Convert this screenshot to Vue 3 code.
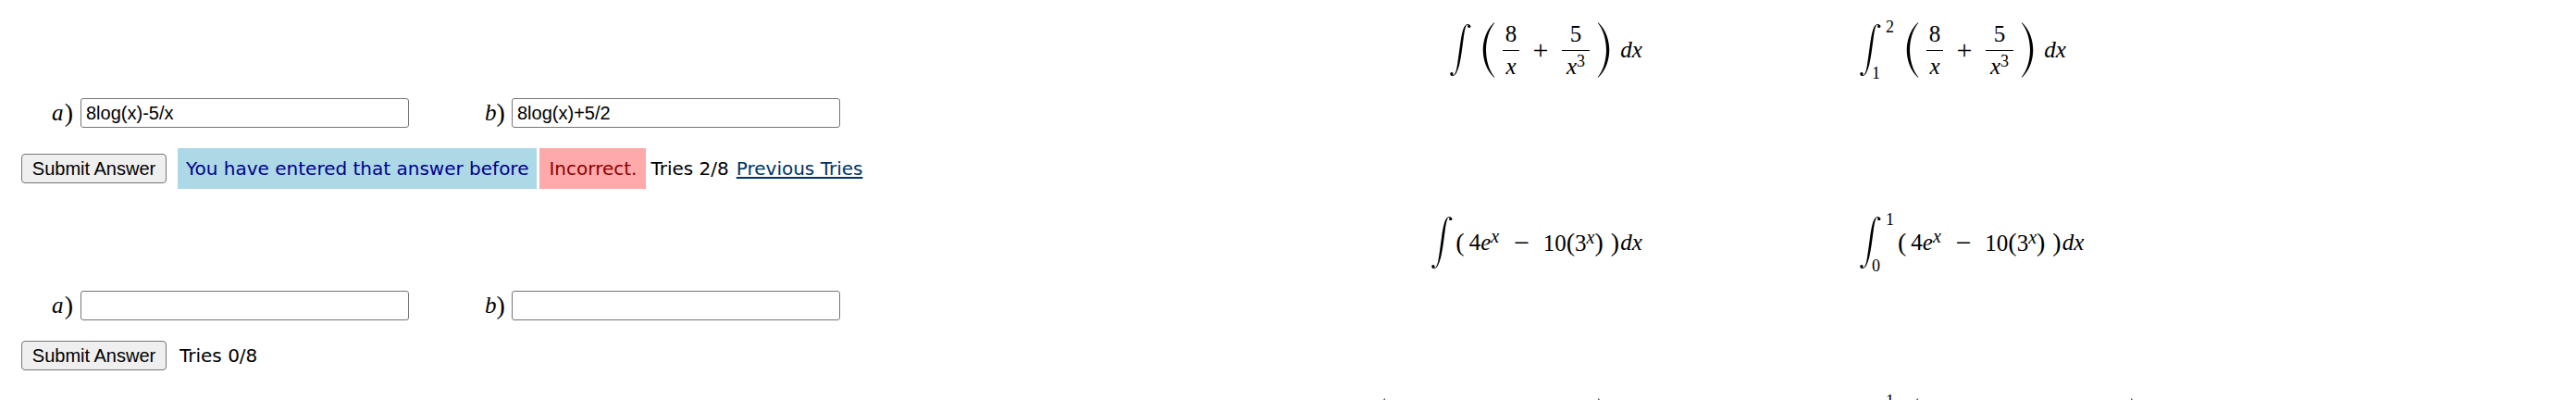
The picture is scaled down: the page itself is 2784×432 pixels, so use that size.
<script setup>
import { ref } from 'vue'

const problems = ref([
  {
    id: 'p1',
    kind: 'fractions',
    limits: ['1', '2'],
    answers: { a: '8log(x)-5/x', b: '8log(x)+5/2' },
    repeated: true,
    tries: 'Tries 2/8'
  },
  {
    id: 'p2',
    kind: 'exponentials',
    limits: ['0', '1'],
    answers: { a: '', b: '' },
    repeated: false,
    tries: 'Tries 0/8'
  }
])

// Stretched fence that surrounds the tall fractions.
const fence = 'M12.5 .5C-3.2 16-3.2 44 12.5 59.5L13.4 59.5C.9 44 .9 16 13.4 .5Z'
</script>

<template>
  <main class="page">
    <section v-for="p in problems" :key="p.id" class="problem">
      <form class="answers" @submit.prevent>
        <div class="fields">
          <div v-for="part in ['a', 'b']" :key="part" class="field">
            <label :for="p.id + part"><i>{{ part }}</i><span class="label-paren">)</span></label>
            <input :id="p.id + part" v-model="p.answers[part]" type="text" autocomplete="off" />
          </div>
        </div>
        <div class="status">
          <button type="submit">Submit Answer</button>
          <template v-if="p.repeated">
            <span class="notice">You have entered that answer before</span>
            <span class="notice wrong">Incorrect.</span>
          </template>
          <span class="tries">{{ p.tries }}</span>
          <a v-if="p.repeated" href="#">Previous Tries</a>
        </div>
      </form>

      <div v-for="definite in [false, true]" :key="String(definite)" class="formula" :class="{ definite }">
        <svg class="integral" viewBox="0 0 23 58" role="img" aria-label="integral">
          <path d="M21.6 2.5C20.5 .2 17 .2 15 5C11.8 12 10.7 28 8.4 42C7.3 50 6 55.8 3.6 56C2.6 56.1 1.9 55.6 1.5 55L.8 56.3C2 57.8 5.6 57.7 7.8 52C11.3 45 12.8 30 14.6 17C16 7 17 1.9 19 1.8C19.8 1.8 20.3 2.2 20.7 2.8Z" />
          <circle cx="20.7" cy="3.4" r="1.7" />
          <circle cx="1.9" cy="54.8" r="1.7" />
        </svg>
        <span v-if="definite" class="limits">
          <span class="upper">{{ p.limits[1] }}</span>
          <span class="lower">{{ p.limits[0] }}</span>
        </span>
        <template v-if="p.kind === 'fractions'">
          <svg class="fence open" viewBox="0 0 14 60" aria-hidden="true"><path :d="fence" /></svg>
          <span class="fraction"><span class="numerator">8</span><span class="denominator"><i>x</i></span></span>
          <span class="operator">+</span>
          <span class="fraction wide"><span class="numerator">5</span><span class="denominator"><i>x</i><sup>3</sup></span></span>
          <svg class="fence close" viewBox="0 0 14 60" aria-hidden="true"><path :d="fence" transform="matrix(-1 0 0 1 14 0)" /></svg>
        </template>
        <template v-else>
          <span class="small open">(</span>
          <span class="term">4<i>e</i><sup><i>x</i></sup></span>
          <span class="operator">−</span>
          <span class="term product">10<span class="inner">(</span>3<sup><i>x</i></sup><span class="inner">)</span></span>
          <span class="small close">)</span>
        </template>
        <i class="differential">dx</i>
      </div>
    </section>

    <section class="problem next">
      <div v-for="definite in [false, true]" :key="String(definite)" class="formula" :class="{ definite }">
        <span v-if="definite" class="limits"><span class="upper">1</span></span>
        <svg class="fence" viewBox="0 0 14 60" aria-hidden="true"><path :d="fence" /></svg>
        <svg class="fence far" viewBox="0 0 14 60" aria-hidden="true"><path :d="fence" transform="matrix(-1 0 0 1 14 0)" /></svg>
      </div>
    </section>
  </main>
</template>

<style>
body {
  margin: 0;
  overflow: hidden;
  background: #fff;
}
</style>

<style scoped>
.page {
  height: 100vh;
  overflow: hidden;
  color: #000;
  font: 20px/24px "DejaVu Sans", Verdana, sans-serif;
}

.problem {
  display: grid;
  grid-template-columns: 1fr 384px 774px;
  column-gap: 234px;
  align-items: start;
}

.answers {
  padding: 106px 0 4px 23px;
  white-space: nowrap;
}

.fields {
  display: flex;
  gap: 82px;
  padding-left: 33px;
}

.field {
  display: flex;
  align-items: center;
  gap: 8px;
}

label {
  display: flex;
  align-items: center;
  justify-content: space-between;
  width: 23px;
  font: 25px/32px "Liberation Serif", serif;
}

.field + .field label {
  width: 21px;
}

.label-paren {
  font-size: 28px;
}

input {
  box-sizing: border-box;
  width: 355px;
  height: 32px;
  padding: 0 5px;
  border: 1px solid #767676;
  border-radius: 3px;
  background: #fff;
  color: #000;
  font: 20px/24px "Liberation Sans", Arial, sans-serif;
}

.status {
  display: flex;
  align-items: center;
  margin-top: 22px;
}

button {
  box-sizing: border-box;
  width: 157px;
  height: 32px;
  margin-right: 12px;
  padding: 0;
  border: 1px solid #767676;
  border-radius: 4px;
  background: #efefef;
  color: #000;
  font: 20px/24px "Liberation Sans", Arial, sans-serif;
}

.notice {
  margin-right: 3px;
  padding: 10px 9px;
  background: #add8e6;
  color: #00008b;
}

.wrong {
  padding: 10px;
  background: #faa;
  color: #8b0000;
}

.tries {
  margin-left: 2px;
}

.status a {
  margin-left: 8px;
  color: #036;
  text-underline-offset: 2px;
}

.formula {
  display: flex;
  align-items: center;
  justify-content: flex-end;
  height: 108px;
  font: 25px/30px "Liberation Serif", serif;
  white-space: nowrap;
}

.definite {
  justify-content: flex-start;
}

svg {
  flex: none;
  display: block;
}

.integral {
  width: 23px;
  height: 58px;
}

.limits {
  display: flex;
  flex-direction: column;
  justify-content: space-between;
  width: 15px;
  height: 68px;
  font-size: 18px;
  line-height: 18px;
}

.upper {
  padding-left: 5px;
}

.lower {
  margin-left: -10px;
}

.fence {
  width: 14px;
  height: 60px;
}

.fence.open {
  margin: 0 8px 0 12px;
}

.fence.close {
  margin: 0 10px 0 8px;
}

.fraction {
  display: flex;
  flex-direction: column;
  width: 18px;
  text-align: center;
}

.fraction.wide {
  width: 30px;
}

.numerator {
  padding-bottom: 2px;
}

.denominator {
  padding-top: 2px;
  border-top: 1px solid #000;
}

.operator {
  width: 46px;
  font-size: 30px;
  text-align: center;
}

.term {
  min-width: 34px;
}

.product {
  min-width: 68px;
}

sup {
  font-size: 18px;
  line-height: 0;
  vertical-align: 8px;
}

sup i {
  font-size: 20px;
}

.small,
.inner {
  font-size: 28px;
}

.small.open {
  margin: 0 5px 0 3px;
}

.small.close {
  margin-left: 5px;
}

.differential {
  width: 26px;
  text-align: center;
}

.next .formula {
  justify-content: flex-start;
  height: 112px;
}

.next .formula:first-child {
  grid-column: 2;
  padding-left: 92px;
}

.next .limits {
  height: 72px;
  padding: 0 12px 0 23px;
}

.far {
  margin-left: 228px;
}
</style>
